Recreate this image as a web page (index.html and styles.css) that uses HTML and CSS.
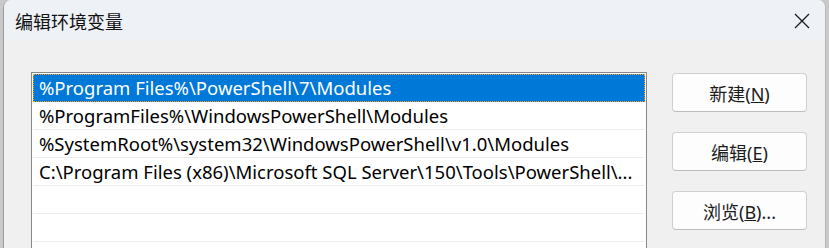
FILE: index.html
```html
<!DOCTYPE html>
<html lang="zh-CN">
<head>
    <meta charset="UTF-8">
    <title>编辑环境变量</title>
    <link rel="stylesheet" href="styles.css">
</head>
<body>
    <div class="window">
        <div class="titlebar">
            <span class="title">编辑环境变量</span>
            <span class="close">
                <svg width="16" height="16" viewBox="0 0 16 16">
                    <path d="M1 1 L15 15 M15 1 L1 15" stroke="#1a1a1a" stroke-width="1.3" fill="none"/>
                </svg>
            </span>
        </div>

        <div class="content">
            <div class="listbox">
                <div class="row selected">%Program Files%\PowerShell\7\Modules</div>
                <div class="row">%ProgramFiles%\WindowsPowerShell\Modules</div>
                <div class="row">%SystemRoot%\system32\WindowsPowerShell\v1.0\Modules</div>
                <div class="row">C:\Program Files (x86)\Microsoft SQL Server\150\Tools\PowerShell\...</div>
                <div class="row"></div>
                <div class="row"></div>
            </div>

            <div class="buttons">
                <button class="btn">新建(<u>N</u>)</button>
                <button class="btn">编辑(<u>E</u>)</button>
                <button class="btn">浏览(<u>B</u>)...</button>
            </div>
        </div>
    </div>
</body>
</html>
```

FILE: styles.css
```css
html, body {
    margin: 0;
    height: 100%;
    overflow: hidden;
}
body {
    background: #c9c9c9;
    font-family: "Noto Sans", "Noto Sans CJK SC", sans-serif;
    color: #1b1b1b;
}
.window {
    margin-left: 3px;
    width: 823px;
    height: 100vh;
    box-sizing: border-box;
    background: #f0f0f0;
    border-left: 1px solid #9a9a9a;
    border-right: 1px solid #b8b8b8;
    border-radius: 8px 8px 0 0;
    overflow: hidden;
}
.titlebar {
    height: 41px;
    background: #eef2f7;
    display: flex;
    align-items: center;
    justify-content: space-between;
    padding: 0 15px 0 11px;
}
.title {
    font-size: 18px;
    font-family: "Noto Sans CJK SC", sans-serif;
    color: #111;
}
.close {
    display: flex;
    width: 16px;
    height: 16px;
}
.content {
    display: flex;
    gap: 25px;
    padding: 31px 0 0 27px;
}
.listbox {
    width: 612px;
    height: 174px;
    background: #fff;
    border: 1px solid #828790;
    border-bottom: none;
    padding: 1px 1px 0;
    overflow: hidden;
}
.row {
    height: 27px;
    line-height: 27px;
    border-bottom: 1px solid #ececec;
    padding-left: 6px;
    font-size: 18.5px;
    white-space: nowrap;
    color: #000;
}
.row.selected {
    background: #0078d7;
    color: #fff;
    outline: 1px dotted #ff9a1f;
    outline-offset: -1px;
    border-bottom-color: #0078d7;
}
.buttons {
    display: flex;
    flex-direction: column;
    gap: 20px;
    padding-top: 1px;
}
.btn {
    width: 135px;
    height: 39px;
    background: #fdfdfd;
    border: 1px solid #d0d0d0;
    border-bottom-color: #bdbdbd;
    border-radius: 4px;
    font-family: "Noto Sans", "Noto Sans CJK SC", sans-serif;
    font-size: 18px;
    color: #1b1b1b;
    padding: 0;
}
```
